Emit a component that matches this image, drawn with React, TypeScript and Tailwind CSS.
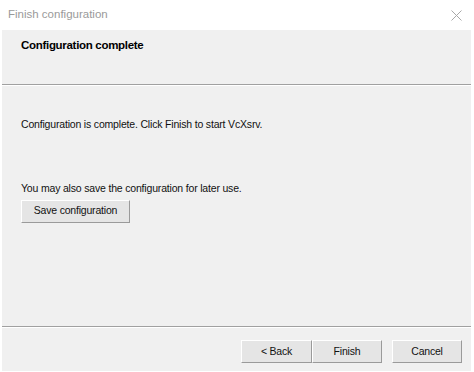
import React from "react";

const font = { fontFamily: '"Liberation Sans", Arial, sans-serif' };

function Btn({ children, className = "" }: { children: React.ReactNode; className?: string }) {
  return (
    <div
      className={
        "flex items-center justify-center h-[23px] bg-[#e5e5e5] border border-t-white border-l-white border-r-[#9a9a9a] border-b-[#9a9a9a] text-[10.5px] tracking-[-0.2px] text-[#111] " +
        className
      }
    >
      {children}
    </div>
  );
}

export default function App() {
  return (
    <div className="w-[474px] h-[372px] bg-white flex flex-col overflow-hidden" style={font}>
      <div className="h-[30px] flex items-center justify-between pl-2 pr-[12px] shrink-0">
        <span className="text-[11.5px] text-[#9a9a9a]">Finish configuration</span>
        <svg width="11" height="11" viewBox="0 0 11 11">
          <path d="M0.5 0.5 L10.5 10.5 M10.5 0.5 L0.5 10.5" stroke="#a8a8a8" strokeWidth="1" fill="none" />
        </svg>
      </div>
      <div className="flex-1 ml-[2px] mr-[3px] mb-[1px] bg-[#f0f0f0] flex flex-col">
        <div className="h-[55px] pl-[19px] pt-[7px] border-b border-[#a0a0a0] shrink-0">
          <div className="text-[11.5px] font-bold text-black tracking-[-0.3px]">Configuration complete</div>
        </div>
        <div className="h-[1px] bg-white shrink-0" />
        <div className="flex-1 pl-[19px] flex flex-col">
          <div className="pt-[31px] text-[10.5px] tracking-[-0.18px] text-[#111]">
            Configuration is complete. Click Finish to start VcXsrv.
          </div>
          <div className="pt-[48px] text-[10.5px] tracking-[-0.18px] text-[#111]">
            You may also save the configuration for later use.
          </div>
          <Btn className="mt-[3px] w-[109px]">Save configuration</Btn>
        </div>
        <div className="h-[1px] bg-[#a0a0a0] shrink-0" />
        <div className="h-[1px] bg-white shrink-0" />
        <div className="h-[43px] flex items-start justify-end pt-[12px] pr-[9px] shrink-0">
          <Btn className="w-[71px]">&lt; Back</Btn>
          <Btn className="w-[70px]">Finish</Btn>
          <Btn className="w-[70px] ml-[10px]">Cancel</Btn>
        </div>
      </div>
    </div>
  );
}
